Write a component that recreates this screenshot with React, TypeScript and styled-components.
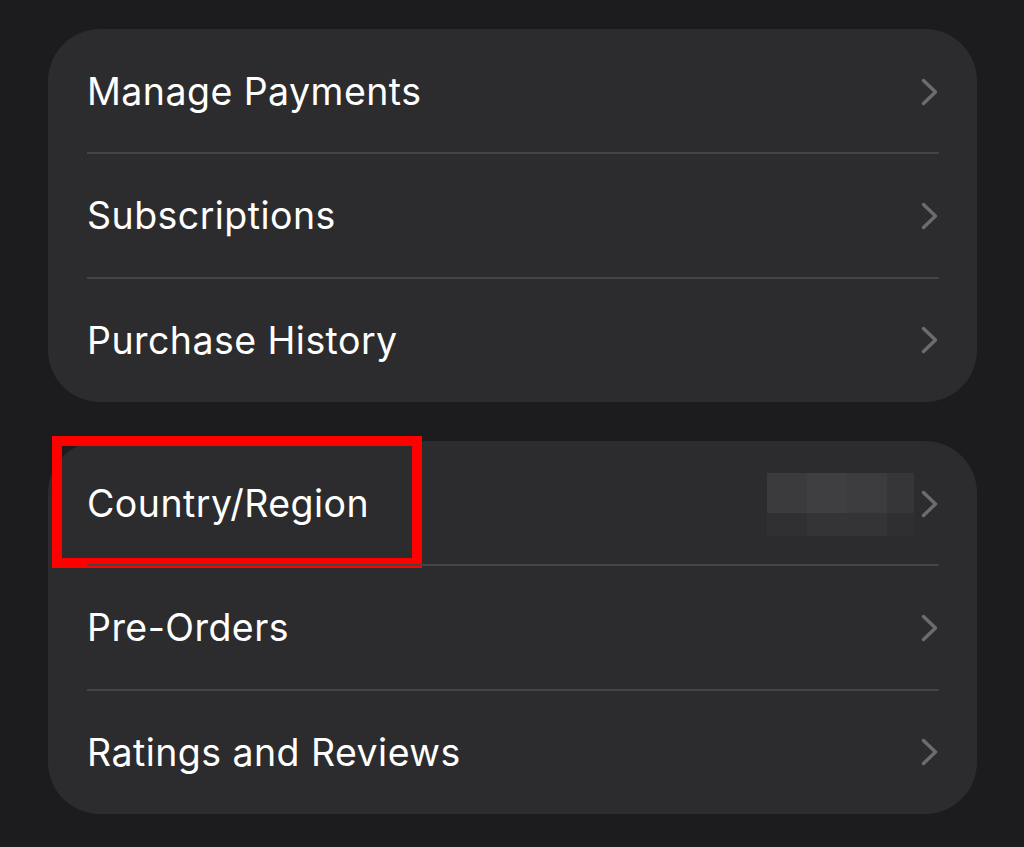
import React from "react";
import styled, { createGlobalStyle } from "styled-components";

const Global = createGlobalStyle`
  html, body {
    margin: 0;
    padding: 0;
    background: #1c1c1e;
  }
  body {
    font-family: Inter, "Noto Sans", sans-serif;
    -webkit-font-smoothing: antialiased;
  }
`;

const Page = styled.div`
  display: flex;
  flex-direction: column;
  gap: 39px;
  padding: 29px 47px 34px 48px;
  min-height: 847px;
  box-sizing: border-box;
`;

const Card = styled.section`
  background: #2c2c2e;
  border-radius: 52px;
  display: flex;
  flex-direction: column;
`;

const Row = styled.div<{ $divider?: boolean }>`
  position: relative;
  height: 124.34px;
  display: flex;
  align-items: center;
  padding: 1px 39px 0 39px;
  box-sizing: border-box;
  &::after {
    content: "";
    display: ${(p) => (p.$divider ? "block" : "none")};
    position: absolute;
    left: 39px;
    right: 38px;
    bottom: -1px;
    height: 2px;
    background: #444446;
  }
`;

const Label = styled.span`
  flex: 1;
  color: #ffffff;
  font-size: 37.5px;
  letter-spacing: 0.45px;
  font-weight: 400;
  line-height: 1;
`;

const Chevron = styled.svg`
  width: 17px;
  height: 28px;
  flex: none;
`;

const Blur = styled.div`
  display: grid;
  grid-template-columns: 40px 40px 40px 27px;
  grid-template-rows: 40px 23px;
  margin-right: 7px;
  margin-top: 1px;
`;

const Cell = styled.div<{ $c: string }>`
  background: ${(p) => p.$c};
`;

const Highlight = styled.div`
  position: absolute;
  left: 4px;
  top: -5px;
  width: 370px;
  height: 132px;
  border: 10px solid #ff0000;
  box-sizing: border-box;
  pointer-events: none;
`;

const ChevronIcon = () => (
  <Chevron viewBox="0 0 17 28">
    <path
      d="M2.5 2.5 L14.5 14 L2.5 25.5"
      fill="none"
      stroke="#6c6c70"
      strokeWidth="3.4"
      strokeLinecap="round"
      strokeLinejoin="round"
    />
  </Chevron>
);

const blurCells = [
  "#3b3b3d", "#3f3f41", "#3c3c3e", "#363638",
  "#303032", "#343436", "#343436", "#2f2f31",
];

export default function App() {
  return (
    <>
      <Global />
      <Page>
        <Card>
          <Row $divider>
            <Label>Manage Payments</Label>
            <ChevronIcon />
          </Row>
          <Row $divider>
            <Label>Subscriptions</Label>
            <ChevronIcon />
          </Row>
          <Row>
            <Label>Purchase History</Label>
            <ChevronIcon />
          </Row>
        </Card>
        <Card>
          <Row $divider>
            <Label>Country/Region</Label>
            <Blur>
              {blurCells.map((c, i) => (
                <Cell key={i} $c={c} />
              ))}
            </Blur>
            <ChevronIcon />
            <Highlight />
          </Row>
          <Row $divider>
            <Label>Pre-Orders</Label>
            <ChevronIcon />
          </Row>
          <Row>
            <Label>Ratings and Reviews</Label>
            <ChevronIcon />
          </Row>
        </Card>
      </Page>
    </>
  );
}
